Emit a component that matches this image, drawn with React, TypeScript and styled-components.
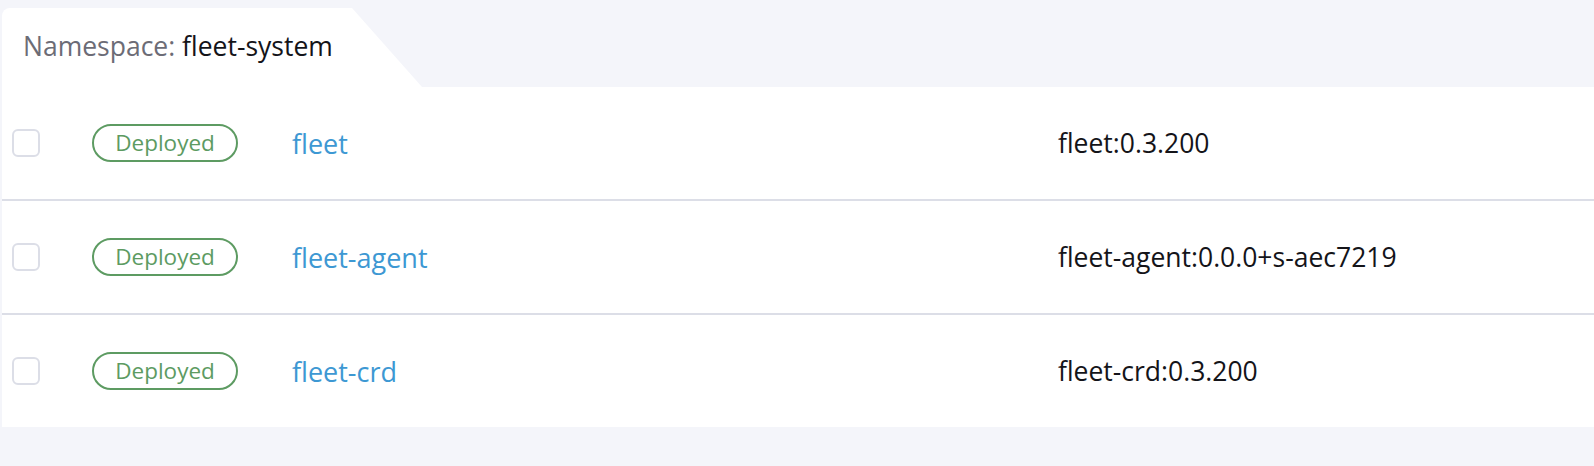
import React from "react";
import styled, { createGlobalStyle } from "styled-components";

const Global = createGlobalStyle`
  html, body { margin: 0; padding: 0; background: #f4f5fa; }
  body { font-family: "Open Sans", "Noto Sans", sans-serif; }
`;

const Page = styled.div`
  padding: 8px 0 0 2px;
  height: 466px;
  box-sizing: border-box;
`;

const TabBar = styled.div`
  display: flex;
  height: 79px;
`;

const Tab = styled.div`
  width: 420px;
  height: 79px;
  background: #ffffff;
  border-top-left-radius: 8px;
  clip-path: polygon(0 0, 350px 0, 100% 100%, 0 100%);
  box-sizing: border-box;
  padding: 20px 0 0 21px;
  font-size: 26.5px;
  line-height: 36px;
  color: #141419;
`;

const Label = styled.span`
  color: #6c6c76;
`;

const Table = styled.div`
  background: #ffffff;
  display: flex;
  flex-direction: column;
`;

const Row = styled.div<{ $last?: boolean }>`
  display: grid;
  grid-template-columns: 80px 200px 766px 1fr;
  align-items: center;
  height: 112px;
  padding-left: 10px;
  border-bottom: ${(p) => (p.$last ? "none" : "2px solid #dcdee7")};
`;

const Check = styled.div`
  width: 28px;
  height: 28px;
  box-sizing: border-box;
  border: 2px solid #dcdee7;
  border-radius: 6px;
  background: #fff;
`;

const Badge = styled.span`
  display: inline-flex;
  align-items: center;
  justify-content: center;
  width: 146px;
  height: 38px;
  box-sizing: border-box;
  border: 2px solid #5d9b62;
  border-radius: 19px;
  color: #5d9b62;
  font-size: 22.5px;
  padding-bottom: 1px;
`;

const Name = styled.a`
  color: #3d98d3;
  font-size: 27px;
  text-decoration: none;
`;

const Version = styled.span`
  color: #141419;
  font-size: 26.5px;
`;

const rows = [
  { name: "fleet", version: "fleet:0.3.200" },
  { name: "fleet-agent", version: "fleet-agent:0.0.0+s-aec7219" },
  { name: "fleet-crd", version: "fleet-crd:0.3.200" },
];

export default function App() {
  return (
    <Page>
      <Global />
      <TabBar>
        <Tab>
          <Label>Namespace:</Label> fleet-system
        </Tab>
      </TabBar>
      <Table>
        {rows.map((r, i) => (
          <Row key={r.name} $last={i === rows.length - 1}>
            <div>
              <Check />
            </div>
            <div>
              <Badge>Deployed</Badge>
            </div>
            <div>
              <Name href="#">{r.name}</Name>
            </div>
            <div>
              <Version>{r.version}</Version>
            </div>
          </Row>
        ))}
      </Table>
    </Page>
  );
}
